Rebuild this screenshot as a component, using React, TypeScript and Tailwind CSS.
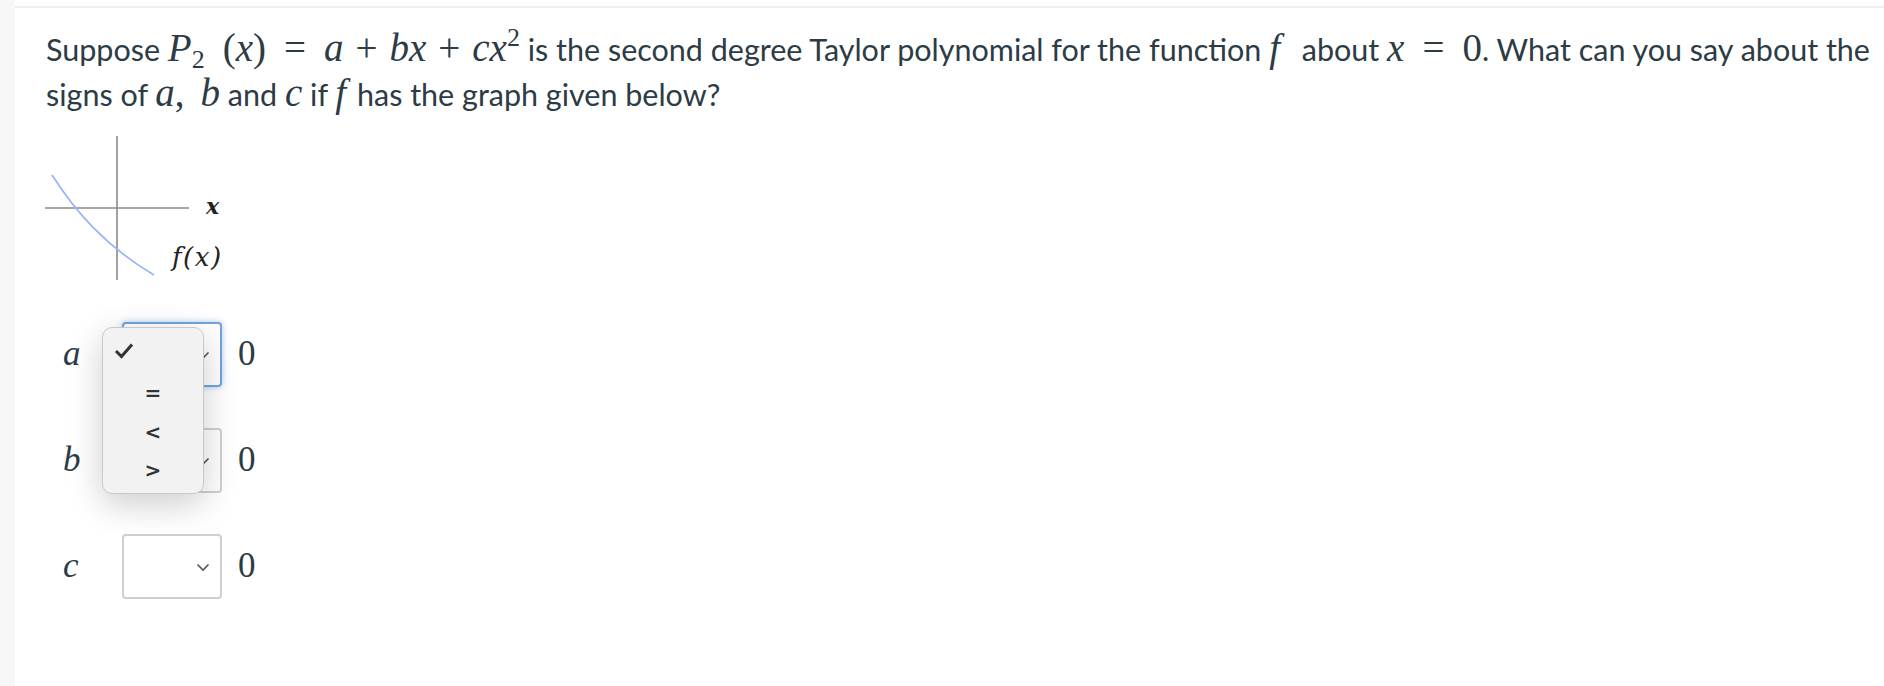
import React from 'react';

const ink = 'text-[#2d3b45]';

function M({ children, i = true, className = '' }: { children: React.ReactNode; i?: boolean; className?: string }) {
  return (
    <span className={`font-['Liberation_Serif',serif] text-[39px] ${i ? 'italic' : ''} ${className}`}>
      {children}
    </span>
  );
}

// relation / binary operator with TeX-like spacing
function Op({ children, wide }: { children: React.ReactNode; wide?: boolean }) {
  return (
    <span
      className={`font-['Liberation_Serif',serif] text-[39px] ${wide ? 'mx-[18px]' : 'mx-[12px]'}`}
    >
      {children}
    </span>
  );
}

function Graph() {
  return (
    <svg width="200" height="150" viewBox="0 0 200 150" className="block">
      <line x1="72" y1="0" x2="72" y2="144" stroke="#8a8a8a" strokeWidth="1.6" />
      <line x1="0" y1="72" x2="144" y2="72" stroke="#8a8a8a" strokeWidth="1.6" />
      <path d="M7 39 C 30 75, 60 110, 109 139" fill="none" stroke="#93b2f7" strokeWidth="1.6" />
      <text
        x="161"
        y="78"
        fontFamily="'DejaVu Serif', serif"
        fontStyle="italic"
        fontWeight="bold"
        fontSize="22"
        fill="#222"
      >
        x
      </text>
      <text
        x="127"
        y="130"
        fontFamily="'DejaVu Serif', serif"
        fontStyle="italic"
        fontSize="26"
        letterSpacing="1.5"
        fill="#222"
      >
        f(x)
      </text>
    </svg>
  );
}

function Select({ focused }: { focused?: boolean }) {
  return (
    <div
      className={`relative h-[65px] w-[100px] rounded-[4px] border-2 bg-white ${
        focused ? 'border-[#6fa4e0] shadow-[0_0_6px_rgba(80,140,220,0.45)]' : 'border-[#cfcfcf]'
      }`}
    >
      <svg
        className="absolute right-[10px] top-1/2 -translate-y-1/2"
        width="14"
        height="10"
        viewBox="0 0 14 10"
      >
        <path d="M1.5 2.5 L7 8 L12.5 2.5" fill="none" stroke="#555" strokeWidth="1.6" />
      </svg>
    </div>
  );
}

function Row({ name, focused }: { name: string; focused?: boolean }) {
  return (
    <div className="flex items-center h-[65px]">
      <div className="w-[76px] pl-[17px] font-['Liberation_Serif',serif] text-[35px] italic">{name}</div>
      <Select focused={focused} />
      <div className="ml-[16px] font-['Liberation_Serif',serif] text-[35px]">0</div>
    </div>
  );
}

export default function App() {
  return (
    <div className={`flex min-h-[686px] bg-white ${ink} font-['Lato',sans-serif]`}>
      <div className="w-[15px] shrink-0 bg-[#f7f7f7]" />
      <div className="flex-1">
        <div className="mt-[6px] h-[2px] bg-[#eeeeee]" />
        <div className="relative pl-[31px] pt-[20px]">
          <div className="text-[30.5px] leading-[40px] whitespace-nowrap">
            <div>
              Suppose <M>P</M>
              <span className="font-['Liberation_Serif',serif] text-[26px] relative top-[7px] mr-[18px]">2</span>
              <M i={false}>(</M>
              <M>x</M>
              <M i={false}>)</M>
              <Op wide>=</Op>
              <M>a</M>
              <Op>+</Op>
              <M>bx</M>
              <Op>+</Op>
              <M>cx</M>
              <span className="font-['Liberation_Serif',serif] text-[26px] relative -top-[15px]">2</span> is the
              second degree Taylor polynomial for the function <M className="mr-[14px]">f</M> about <M>x</M>
              <Op wide>=</Op>
              <M i={false}>0</M>. What can you say about the
            </div>
            <div>
              signs of <M>a</M>
              <M i={false}>,</M>
              <M className="ml-[16px]">b</M> and <M>c</M> if <M className="mr-[3px]">f</M> has the graph given
              below?
            </div>
          </div>

          <div className="mt-[22px] ml-[-1px]">
            <Graph />
          </div>

          <div className="mt-[36px] flex flex-col gap-[41px]">
            <Row name="a" focused />
            <Row name="b" />
            <Row name="c" />
          </div>

          <div className="absolute left-[87px] top-[319px] w-[102px] h-[167px] rounded-[10px] border border-[#c9c9c9] bg-[#f2f2f2] shadow-[0_10px_34px_rgba(0,0,0,0.2)] font-['DejaVu_Sans',sans-serif] text-[#333]">
            <div className="absolute left-[11px] top-[14px]">
              <svg width="20" height="17" viewBox="0 0 20 17">
                <path d="M2 9 L7.5 14.5 L18 2.5" fill="none" stroke="#333" strokeWidth="3" />
              </svg>
            </div>
            <div className="absolute left-0 right-0 top-[50px] text-center text-[20px] font-bold">=</div>
            <div className="absolute left-0 right-0 top-[89px] text-center text-[20px] font-bold">&lt;</div>
            <div className="absolute left-0 right-0 top-[127px] text-center text-[20px] font-bold">&gt;</div>
          </div>
        </div>
      </div>
    </div>
  );
}
